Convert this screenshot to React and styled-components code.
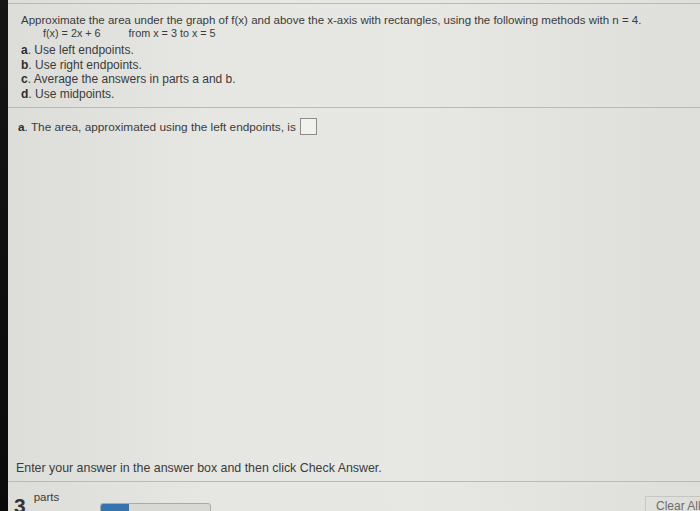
import React from 'react';
import styled, { createGlobalStyle } from 'styled-components';

const Global = createGlobalStyle`
  html, body {
    margin: 0;
    padding: 0;
    background: #e3e4e0;
  }
  body {
    font-family: "Liberation Sans", Arial, sans-serif;
    color: #3a3b3b;
  }
`;

const Screen = styled.div`
  display: flex;
  width: 700px;
  height: 511px;
  overflow: hidden;
  background: linear-gradient(90deg, #dcddd9 0%, #e6e7e3 30%, #e7e8e4 60%, #dedfdb 100%);
`;

const Bezel = styled.div`
  width: 8px;
  flex: none;
  background: linear-gradient(180deg, #151515 0%, #0a0a0a 100%);
`;

const Page = styled.div`
  flex: 1;
  display: flex;
  flex-direction: column;
  min-width: 0;
`;

const Rule = styled.div`
  height: 1px;
  background: #b9bab6;
  margin: ${p => p.$margin || '0'};
`;

const Question = styled.div`
  padding: 9px 0 0 13px;
  font-size: 11.5px;
  line-height: 14.4px;
`;

const Formula = styled.div`
  display: flex;
  padding-left: 22px;
  font-size: 10.8px;
  line-height: 13px;
  gap: 28px;
`;

const Parts = styled.ul`
  list-style: none;
  margin: 3px 0 0 0;
  padding: 0;
  font-size: 12px;
  line-height: 14.5px;
`;

const Letter = styled.b`
  font-weight: bold;
  color: #2d2e2e;
`;

const Answer = styled.div`
  display: flex;
  align-items: center;
  padding: 10px 0 0 10px;
  font-size: 11.8px;
`;

const Box = styled.span`
  display: inline-block;
  width: 15px;
  height: 15px;
  margin-left: 4px;
  border: 1px solid #8c8d8b;
  background: #f1f2ee;
`;

const Spacer = styled.div`
  flex: 1;
`;

const Instruction = styled.div`
  padding: 0 0 6px 8px;
  font-size: 12.4px;
`;

const Footer = styled.div`
  display: flex;
  align-items: flex-end;
  height: 29px;
  padding-left: 6px;
`;

const Count = styled.span`
  font-size: 21px;
  font-weight: bold;
  line-height: 20px;
  color: #333;
  margin-bottom: -5px;
`;

const PartsLabel = styled.span`
  font-size: 11.5px;
  margin: 0 0 8px 8px;
`;

const Progress = styled.div`
  width: 109px;
  height: 8px;
  margin-left: 41px;
  margin-bottom: -2px;
  border: 1px solid #a9aaa6;
  border-radius: 3px 3px 0 0;
  background: #d8d9d5;
  overflow: hidden;
`;

const ProgressFill = styled.div`
  height: 100%;
  background: #3474b0;
`;

const ClearAll = styled.div`
  margin-left: auto;
  padding: 2px 0 0 10px;
  border-left: 1px solid #c5c6c2;
  border-top: 1px solid #c5c6c2;
  height: 15px;
  font-size: 12px;
  color: #6b6c6c;
  white-space: nowrap;
  width: 44px;
  overflow: hidden;
  margin-bottom: -3px;
`;

export default function App() {
  return (
    <>
      <Global />
      <Screen>
        <Bezel />
        <Page>
          <Rule $margin="3px 0 0 0" />
          <Question>
            Approximate the area under the graph of f(x) and above the x-axis with rectangles, using the following methods with n = 4.
            <Formula>
              <span>f(x) = 2x + 6</span>
              <span>from x = 3 to x = 5</span>
            </Formula>
            <Parts>
              <li><Letter>a</Letter>. Use left endpoints.</li>
              <li><Letter>b</Letter>. Use right endpoints.</li>
              <li><Letter>c</Letter>. Average the answers in parts a and b.</li>
              <li><Letter>d</Letter>. Use midpoints.</li>
            </Parts>
          </Question>
          <Rule $margin="6px 0 0 0" />
          <Answer>
            <Letter>a</Letter>. The area, approximated using the left endpoints, is
            <Box />
          </Answer>
          <Spacer />
          <Instruction>Enter your answer in the answer box and then click Check Answer.</Instruction>
          <Rule />
          <Footer>
            <Count>3</Count>
            <PartsLabel>parts</PartsLabel>
            <Progress>
              <ProgressFill style={{ width: `${(1 / 4) * 100}%` }} />
            </Progress>
            <ClearAll>Clear All</ClearAll>
          </Footer>
        </Page>
      </Screen>
    </>
  );
}
